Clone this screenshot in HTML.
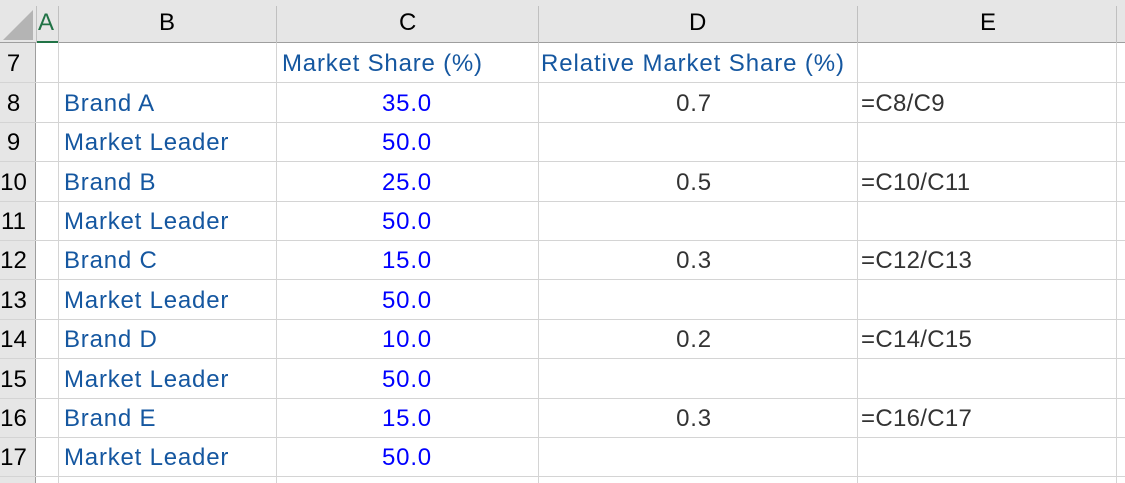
<!DOCTYPE html>
<html><head><style>
body{margin:0;width:1125px;height:483px;overflow:hidden;background:#fff;font-family:"Liberation Sans",Arial,sans-serif;position:relative}
.h{position:absolute;top:0;height:43px;background:#e6e6e6}
.vl{position:absolute;width:1px;background:#d4d4d4}
.hl{position:absolute;height:1px;background:#d4d4d4;left:0;width:1125px}
.t{position:absolute;font-size:24px;letter-spacing:0.8px;white-space:nowrap;line-height:24px}
.hd{position:absolute;font-size:24px;color:#000;top:11px;line-height:24px}
.rn{position:absolute;left:0;width:27px;text-align:center;font-size:24px;color:#000;line-height:24px}
.bl{color:#1557a0}.nb{color:#0000ff}.gr{color:#333}
</style></head><body>
<div class="h" style="left:0;width:1125px"></div>
<div style="position:absolute;left:0;top:43px;width:36px;height:440px;background:#e6e6e6"></div>
<svg style="position:absolute;left:0;top:0" width="36" height="43"><polygon points="33,10 33,40 3,40" fill="#b4b4b4"/></svg>
<div style="position:absolute;left:0;top:42px;width:1125px;height:1px;background:#9e9e9e"></div>
<div style="position:absolute;left:35px;top:43px;width:1px;height:440px;background:#9e9e9e"></div>
<div style="position:absolute;left:36px;top:41px;width:22px;height:2px;background:#217346"></div>
<div class="vl" style="left:36px;top:6px;height:37px;background:#c0c0c0"></div>
<div class="vl" style="left:58px;top:6px;height:477px"></div>
<div class="vl" style="left:276px;top:6px;height:477px"></div>
<div class="vl" style="left:538px;top:6px;height:477px"></div>
<div class="vl" style="left:857px;top:6px;height:477px"></div>
<div class="vl" style="left:1116px;top:6px;height:477px"></div>
<div class="vl" style="left:58px;top:6px;height:37px;background:#c0c0c0"></div>
<div class="vl" style="left:276px;top:6px;height:37px;background:#c0c0c0"></div>
<div class="vl" style="left:538px;top:6px;height:37px;background:#c0c0c0"></div>
<div class="vl" style="left:857px;top:6px;height:37px;background:#c0c0c0"></div>
<div class="vl" style="left:1116px;top:6px;height:37px;background:#c0c0c0"></div>
<div class="hd" style="left:38px;color:#217346">A</div>
<div class="hd" style="left:159px">B</div>
<div class="hd" style="left:399px">C</div>
<div class="hd" style="left:689px">D</div>
<div class="hd" style="left:980px">E</div>
<div id="g"></div>
<script>
(function(){
var rows=[["","Market Share (%)","Relative Market Share (%)",""],["Brand A","35.0","0.7","=C8/C9"],["Market Leader","50.0","",""],["Brand B","25.0","0.5","=C10/C11"],["Market Leader","50.0","",""],["Brand C","15.0","0.3","=C12/C13"],["Market Leader","50.0","",""],["Brand D","10.0","0.2","=C14/C15"],["Market Leader","50.0","",""],["Brand E","15.0","0.3","=C16/C17"],["Market Leader","50.0","",""]];
var h="";
for(var i=0;i<11;i++){
 var y0=43+39.4*i, bot=Math.round(y0+39.4), ty=bot-30;
 h+='<div class="hl" style="top:'+bot+'px"></div>';
 h+='<div class="rn" style="top:'+ty+'px">'+(7+i)+'</div>';
 var r=rows[i];
 if(i==0){
  h+='<div class="t bl" style="left:282px;top:'+ty+'px">'+r[1]+'</div>';
  h+='<div class="t bl" style="left:541px;top:'+ty+'px;letter-spacing:0.9px">'+r[2]+'</div>';
 } else {
  h+='<div class="t bl" style="left:64px;top:'+ty+'px">'+r[0]+'</div>';
  h+='<div class="t nb" style="left:277px;width:260px;text-align:center;top:'+ty+'px">'+r[1]+'</div>';
  h+='<div class="t gr" style="left:539px;width:310px;text-align:center;top:'+ty+'px">'+r[2]+'</div>';
  h+='<div class="t gr" style="left:861px;top:'+ty+'px;letter-spacing:0.3px">'+r[3]+'</div>';
 }
}
document.getElementById("g").innerHTML=h;
})();
</script>
</body></html>
